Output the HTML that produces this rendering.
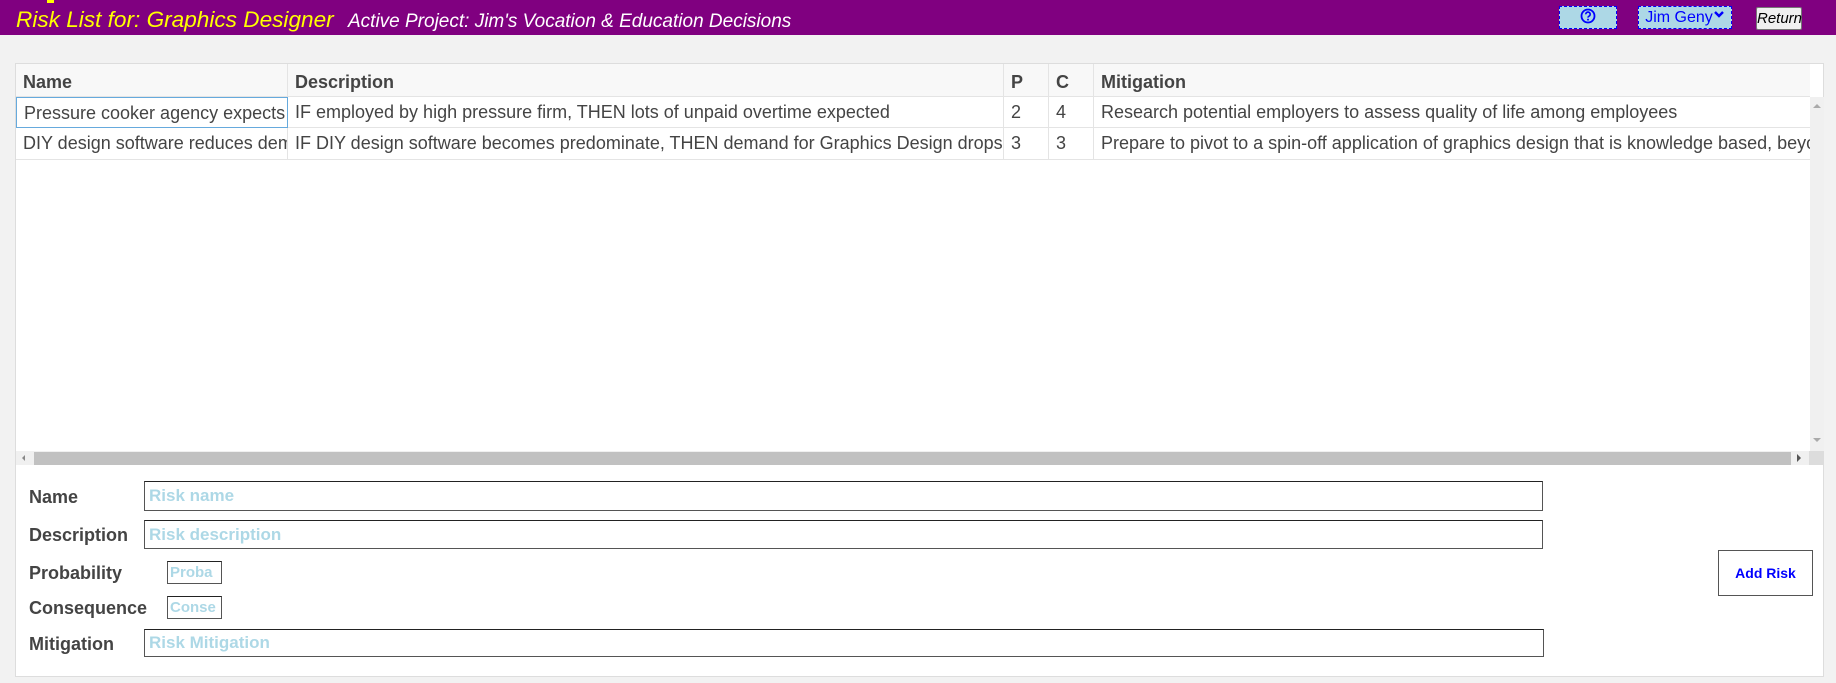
<!DOCTYPE html>
<html><head><meta charset="utf-8"><style>
*{box-sizing:border-box;margin:0;padding:0}
body{width:1836px;height:683px;background:#f2f2f2;font-family:"Liberation Sans",Arial,sans-serif;position:relative;overflow:hidden}
.hdr{position:absolute;left:0;top:0;width:1836px;height:35px;background:#800080}
.abs{position:absolute}
.title{left:16px;top:7px;color:#ffff00;font-style:italic;font-size:22.6px;white-space:nowrap}
.proj{left:348px;top:11px;color:#fff;font-style:italic;font-size:19px;white-space:nowrap}
.btn{background:#add8e6;border:1px dashed #0000ff;color:#0000ff;font-size:16px;text-align:center;line-height:21px}
.ret{background:#f0f0f0;border:1px solid #777;font-style:italic;font-size:15px;line-height:21px;text-align:center;color:#000;border-radius:2px}
.grid{left:15px;top:63px;width:1809px;height:402px;background:#fff;border:1px solid #ddd}
.cell{position:absolute;font-size:18px;color:#444;white-space:nowrap;overflow:hidden;padding-left:7px;border-right:1px solid #e4e4e4;border-bottom:1px solid #e4e4e4}
.h{font-weight:bold;background:#f8f8f8;height:33px;line-height:36px}
.r{height:31px;line-height:31px}
.form{left:15px;top:465px;width:1809px;height:212px;background:#fff;border:1px solid #ddd;border-top:none}
.lbl{position:absolute;left:29px;font-weight:bold;font-size:18px;color:#444}
.inp{position:absolute;border:1px solid #555;border-top-color:#222;background:#fff;color:#add8e6;font-weight:bold;font-size:17px;padding-left:4px;white-space:nowrap;overflow:hidden}
</style></head><body>
<div class="hdr"></div>
<div class="abs" style="left:47px;top:0;width:7px;height:3px;background:#ff0"></div>
<div class="abs title">Risk List for: Graphics Designer</div>
<div class="abs proj">Active Project: Jim's Vocation &amp; Education Decisions</div>
<div class="abs btn" style="left:1559px;top:6px;width:58px;height:23px"><svg width="16" height="16" viewBox="0 0 16 16" style="vertical-align:-2px"><circle cx="8" cy="8" r="6.5" fill="none" stroke="#00f" stroke-width="1.8"/><path d="M5.8 6.3a2.2 2.2 0 1 1 3 2c-.6.3-.8.7-.8 1.3" fill="none" stroke="#00f" stroke-width="1.6"/><circle cx="8" cy="11.6" r="1" fill="#00f"/></svg></div>
<div class="abs btn" style="left:1638px;top:6px;width:94px;height:23px">Jim Geny<svg width="12" height="10" viewBox="0 0 12 10" style="vertical-align:2px"><path d="M2 2l4 4 4-4" fill="none" stroke="#00f" stroke-width="2.4"/></svg></div>
<div class="abs ret" style="left:1756px;top:7px;width:46px;height:23px">Return</div>

<div class="abs grid">
 <div class="cell h" style="left:0;top:0;width:272px">Name</div>
 <div class="cell h" style="left:272px;top:0;width:716px">Description</div>
 <div class="cell h" style="left:988px;top:0;width:45px">P</div>
 <div class="cell h" style="left:1033px;top:0;width:45px">C</div>
 <div class="cell h" style="left:1078px;top:0;width:716px;border-right:none">Mitigation</div>
 <div class="cell r" style="left:0;top:33px;width:272px;border:1px solid #66aadd">Pressure cooker agency expects</div>
 <div class="cell r" style="left:272px;top:33px;width:716px">IF employed by high pressure firm, THEN lots of unpaid overtime expected</div>
 <div class="cell r" style="left:988px;top:33px;width:45px">2</div>
 <div class="cell r" style="left:1033px;top:33px;width:45px">4</div>
 <div class="cell r" style="left:1078px;top:33px;width:716px;border-right:none">Research potential employers to assess quality of life among employees</div>
 <div class="cell r" style="left:0;top:64px;width:272px;height:32px">DIY design software reduces demand</div>
 <div class="cell r" style="left:272px;top:64px;width:716px;height:32px">IF DIY design software becomes predominate, THEN demand for Graphics Design drops</div>
 <div class="cell r" style="left:988px;top:64px;width:45px;height:32px">3</div>
 <div class="cell r" style="left:1033px;top:64px;width:45px;height:32px">3</div>
 <div class="cell r" style="left:1078px;top:64px;width:716px;height:32px;border-right:none">Prepare to pivot to a spin-off application of graphics design that is knowledge based, beyond</div>
 <div class="abs" style="left:1794px;top:33px;width:14px;height:354px;background:#f0f0f0"></div>
 <div class="abs" style="left:1797px;top:40px;width:0;height:0;border-left:4px solid transparent;border-right:4px solid transparent;border-bottom:4px solid #aaa"></div>
 <div class="abs" style="left:1797px;top:374px;width:0;height:0;border-left:4px solid transparent;border-right:4px solid transparent;border-top:4px solid #aaa"></div>
 <div class="abs" style="left:0;top:387px;width:1808px;height:14px;background:#f0f0f0"></div>
 <div class="abs" style="left:18px;top:388px;width:1757px;height:13px;background:#c1c1c1"></div>
 <div class="abs" style="left:6px;top:391px;width:0;height:0;border-top:3px solid transparent;border-bottom:3px solid transparent;border-right:3px solid #888"></div>
 <div class="abs" style="left:1781px;top:390px;width:0;height:0;border-top:4px solid transparent;border-bottom:4px solid transparent;border-left:4px solid #555"></div>
 <div class="abs" style="left:1793px;top:387px;width:15px;height:14px;background:#dcdcdc"></div>
</div>

<div class="abs form"></div>
<div class="lbl" style="top:487px">Name</div>
<div class="inp" style="left:144px;top:481px;width:1399px;height:30px;line-height:28px">Risk name</div>
<div class="lbl" style="top:525px">Description</div>
<div class="inp" style="left:144px;top:520px;width:1399px;height:29px;line-height:27px">Risk description</div>
<div class="lbl" style="top:563px">Probability</div>
<div class="inp" style="left:167px;top:561px;width:55px;height:23px;line-height:21px;font-size:15px;padding-left:2px">Proba</div>
<div class="lbl" style="top:598px">Consequence</div>
<div class="inp" style="left:167px;top:596px;width:55px;height:23px;line-height:21px;font-size:15px;padding-left:2px">Conse</div>
<div class="lbl" style="top:634px">Mitigation</div>
<div class="inp" style="left:144px;top:629px;width:1400px;height:28px;line-height:26px">Risk Mitigation</div>
<div class="abs" style="left:1718px;top:550px;width:95px;height:46px;border:1px solid #555;background:#fff;color:#0000ff;font-weight:bold;font-size:14px;text-align:center;line-height:44px">Add Risk</div>
</body></html>
